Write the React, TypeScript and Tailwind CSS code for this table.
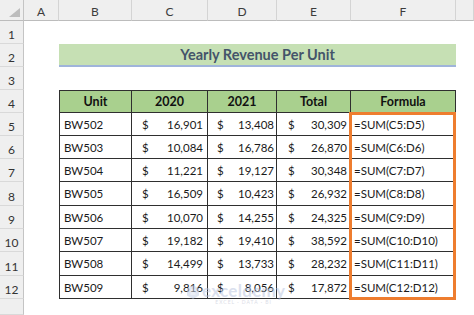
import React from "react";

const ROW = [
  "",
  "row-start-1",
  "row-start-2",
  "row-start-3",
  "row-start-4",
  "row-start-5",
  "row-start-6",
  "row-start-7",
  "row-start-8",
  "row-start-9",
  "row-start-10",
  "row-start-11",
  "row-start-12",
  "row-start-13",
  "row-start-14",
];
const COL = ["", "col-start-1", "col-start-2", "col-start-3", "col-start-4", "col-start-5", "col-start-6", "col-start-7", "col-start-8"];

const data = [
  ["BW502", "16,901", "13,408", "30,309", "=SUM(C5:D5)"],
  ["BW503", "10,084", "16,786", "26,870", "=SUM(C6:D6)"],
  ["BW504", "11,221", "19,127", "30,348", "=SUM(C7:D7)"],
  ["BW505", "16,509", "10,423", "26,932", "=SUM(C8:D8)"],
  ["BW506", "10,070", "14,255", "24,325", "=SUM(C9:D9)"],
  ["BW507", "19,182", "19,410", "38,592", "=SUM(C10:D10)"],
  ["BW508", "14,499", "13,733", "28,232", "=SUM(C11:D11)"],
  ["BW509", "9,816", "8,056", "17,872", "=SUM(C12:D12)"],
];

const letters = ["A", "B", "C", "D", "E", "F", ""];
const hdrCell = "bg-[#efefef] border-r border-b border-r-[#d4d4d4] border-b-[#bcbcbc] flex items-center justify-center pt-[3px] text-[12px] text-[#3c3c3c]";
const rowHdr = "bg-[#efefef] border-r border-b border-r-[#c4c4c4] border-b-[#d9d9d9] flex items-center justify-center pt-[6px] text-[12px] text-[#333]";
const tcell = "border-r border-b border-[#2f2f2f] flex items-center text-[11.5px] text-[#1a1a1a] pt-[1px]";

export default function App() {
  return (
    <div className="w-[474px] h-[315px] overflow-hidden bg-white relative font-['Lato','Liberation_Sans',sans-serif]">
      <div className="grid h-full grid-cols-[24px_35px_73px_76px_69px_74px_105px_1fr] grid-rows-[21px_23px_23px_23px_23px_23px_23px_23px_24px_23px_23px_24px_23px_1fr]">
        {/* corner */}
        <div className={`${COL[1]} ${ROW[1]} bg-[#efefef] border-r border-b border-r-[#c4c4c4] border-b-[#bcbcbc] flex items-end justify-end pr-[3px] pb-[3px]`}>
          <svg width="11" height="9" viewBox="0 0 11 9">
            <polygon points="11,0 11,9 0,9" fill="#bdbdbd" />
          </svg>
        </div>
        {letters.map((l, i) => (
          <div key={"h" + i} className={`${COL[i + 2]} ${ROW[1]} ${hdrCell}`}>
            {l}
          </div>
        ))}
        {Array.from({ length: 13 }).map((_, i) => (
          <div key={"r" + i} className={`${COL[1]} ${ROW[i + 2]} ${rowHdr}`}>
            {i < 12 ? i + 1 : ""}
          </div>
        ))}

        {/* Title */}
        <div className={`${ROW[3]} col-start-3 col-span-5 bg-[#c6e0b4] border-b-2 border-[#9fb4da] flex items-center justify-center text-[14.5px] font-bold text-[#44546a] pt-[1px]`}>
          Yearly Revenue Per Unit
        </div>

        {/* Table header */}
        {["Unit", "2020", "2021", "Total", "Formula"].map((h, i) => (
          <div
            key={"th" + i}
            className={`${ROW[5]} ${COL[i + 3]} ${tcell} border-t justify-center bg-[#a9d08e] font-bold text-[12.5px] text-[#111] ${i === 0 ? "border-l" : ""}`}
          >
            {h}
          </div>
        ))}

        {data.map((r, ri) => (
          <React.Fragment key={"d" + ri}>
            <div className={`${ROW[ri + 6]} ${COL[3]} ${tcell} border-l pl-[4px]`}>{r[0]}</div>
            <div className={`${ROW[ri + 6]} ${COL[4]} ${tcell} justify-between pl-[10px] pr-[4px]`}>
              <span>$</span>
              <span>{r[1]}</span>
            </div>
            <div className={`${ROW[ri + 6]} ${COL[5]} ${tcell} justify-between pl-[9px] pr-[2px]`}>
              <span>$</span>
              <span>{r[2]}</span>
            </div>
            <div className={`${ROW[ri + 6]} ${COL[6]} ${tcell} justify-between pl-[11px] pr-[3px]`}>
              <span>$</span>
              <span>{r[3]}</span>
            </div>
            <div className={`${ROW[ri + 6]} ${COL[7]} ${tcell} pl-[3px]`}>{r[4]}</div>
          </React.Fragment>
        ))}

        {/* Orange selection */}
        <div className={`${ROW[6]} ${COL[7]} row-span-8 -ml-[2px] -mt-[1px] -mb-[1px] border-[3px] border-[#ee7d2f] pointer-events-none`} />
      </div>

      {/* watermark */}
      <div className="absolute left-[186px] top-[282px] flex items-start gap-[2px] opacity-50 pointer-events-none">
        <svg width="14" height="16" viewBox="0 0 14 16" className="mt-[2px]">
          <path d="M7 1 L13 4.5 L13 11.5 L7 15 L1 11.5 L1 4.5 Z" fill="#c3cee6" />
          <path d="M4.5 6 L9.5 6 M4.5 8 L8.5 8 M4.5 10 L9.5 10" stroke="#eef2fa" strokeWidth="1.2" />
        </svg>
        <div className="flex flex-col items-center leading-none">
          <span className="text-[17px] font-bold text-[#b7c3de] tracking-[0.3px]">exceldemy</span>
          <span className="text-[5px] text-[#b9c0cf] tracking-[1px] mt-[1px]">EXCEL · DATA · BI</span>
        </div>
      </div>
    </div>
  );
}
